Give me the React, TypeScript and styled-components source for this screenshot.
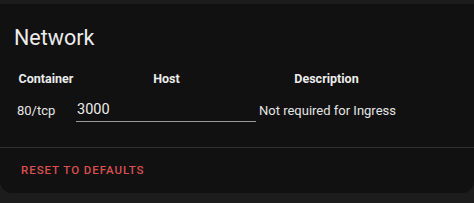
import React from 'react'
import styled, { createGlobalStyle } from 'styled-components'

const GlobalStyle = createGlobalStyle`
  html, body {
    margin: 0;
    padding: 0;
    background: #1c1c1c;
    font-family: Roboto, "Liberation Sans", sans-serif;
    -webkit-font-smoothing: antialiased;
  }
`

const Page = styled.div`
  padding-top: 4px;
  width: 474px;
  height: 203px;
  box-sizing: border-box;
  background: #1c1c1c;
`

const Card = styled.div`
  background: #111111;
  border-radius: 0 0 12px 12px;
  height: 189px;
  display: flex;
  flex-direction: column;
  color: #e1e1e1;
`

const Title = styled.h1`
  margin: 0;
  padding: 20px 14px 0;
  font-size: 21.5px;
  font-weight: 400;
  line-height: 28px;
  color: #ececec;
`

const Content = styled.div`
  padding: 19px 0 0 16px;
  flex: 1;
`

const Table = styled.table`
  border-collapse: collapse;
  border-spacing: 0;
`

const HeadCell = styled.th<{ $width?: number }>`
  text-align: center;
  font-size: 12.5px;
  font-weight: 700;
  color: #ececec;
  padding: 0 0 13px;
  width: ${({ $width }) => ($width ? `${$width}px` : 'auto')};
  line-height: 16px;
`

const Cell = styled.td<{ $pad?: number }>`
  font-size: 13px;
  color: #e4e4e4;
  padding: 2px 0 0 ${({ $pad }) => $pad ?? 0}px;
  vertical-align: top;
  line-height: 18px;
`

const Input = styled.div`
  width: 180px;
  box-sizing: border-box;
  border-bottom: 1px solid #9a9a9a;
  font-size: 14.5px;
  color: #ececec;
  margin-top: -2px;
  padding: 1px 0 2px 1px;
  line-height: 18px;
`

const Actions = styled.div`
  border-top: 1px solid #2f2f2f;
  padding: 14px 0 15px 21px;
`

const ResetButton = styled.button`
  display: block;
  background: none;
  border: none;
  padding: 0;
  font-family: Roboto, "Liberation Sans", sans-serif;
  font-size: 11.5px;
  font-weight: 500;
  letter-spacing: 0.95px;
  color: #d9504f;
  text-transform: uppercase;
  line-height: 16px;
`

export default function App() {
  return (
    <>
      <GlobalStyle />
      <Page>
        <Card>
          <Title>Network</Title>
          <Content>
            <Table>
              <thead>
                <tr>
                  <HeadCell $width={60}>Container</HeadCell>
                  <HeadCell $width={181}>Host</HeadCell>
                  <HeadCell>Description</HeadCell>
                </tr>
              </thead>
              <tbody>
                <tr>
                  <Cell $pad={1}>80/tcp</Cell>
                  <Cell>
                    <Input>3000</Input>
                  </Cell>
                  <Cell $pad={2}>Not required for Ingress</Cell>
                </tr>
              </tbody>
            </Table>
          </Content>
          <Actions>
            <ResetButton>Reset to defaults</ResetButton>
          </Actions>
        </Card>
      </Page>
    </>
  )
}
